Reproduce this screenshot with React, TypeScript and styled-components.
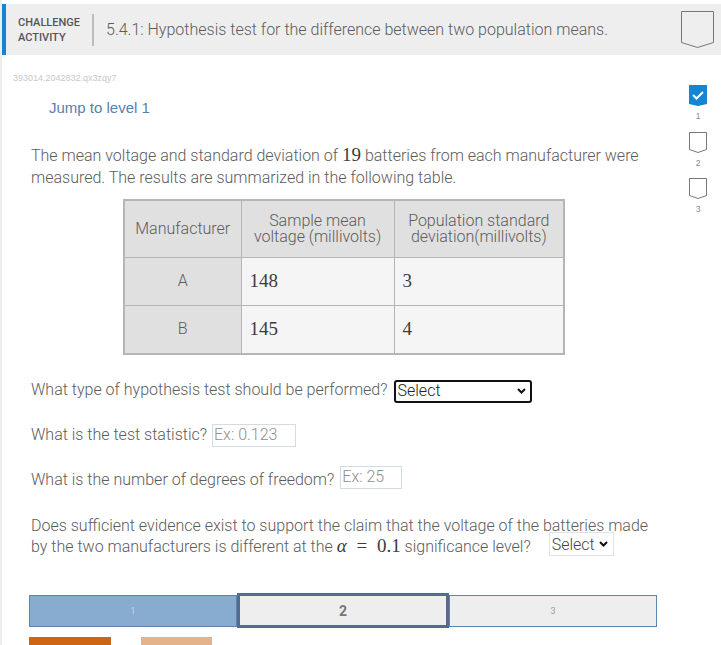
import React from 'react'
import styled, { createGlobalStyle } from 'styled-components'

const GlobalStyle = createGlobalStyle`
  html, body {
    margin: 0;
    padding: 0;
    background: #fff;
    overflow: hidden;
  }
  body {
    font-family: Roboto, "Liberation Sans", sans-serif;
    font-weight: 300;
    color: #5c5c5c;
  }
`

const Page = styled.div`
  width: 721px;
  height: 645px;
  box-sizing: border-box;
  padding-top: 4px;
  border-left: 2px solid #eeeeee;
  overflow: hidden;
`

const Header = styled.header`
  display: flex;
  align-items: center;
  height: 51px;
  background: #eeeeee;
  border-left: 4px solid #1584d2;
`

const ActivityLabel = styled.div`
  width: 74px;
  padding-left: 12px;
  font-size: 11px;
  font-weight: 500;
  line-height: 15px;
  color: #555;
`

const Divider = styled.div`
  width: 2px;
  height: 32px;
  background: #bdbdbd;
  margin-right: 12px;
`

const Title = styled.h1`
  flex: 1;
  margin: 0;
  font-size: 16px;
  font-weight: 300;
  color: #5c5c5c;
`

const HeaderBadge = styled.svg`
  display: block;
  margin-right: 7px;
`

const Body = styled.div`
  display: flex;
`

const Content = styled.main`
  width: 656px;
`

const ActivityId = styled.div`
  margin: 17px 0 0 11px;
  font-family: "Liberation Sans", Arial, sans-serif;
  font-weight: 400;
  font-size: 9px;
  line-height: 12px;
  color: #c8c8c8;
`

const JumpLink = styled.a`
  display: block;
  margin: 15px 0 0 47px;
  font-family: "Liberation Sans", Arial, sans-serif;
  font-weight: 400;
  font-size: 15px;
  line-height: 18px;
  color: #5b80a8;
`

const Prompt = styled.p`
  margin: 28px 0 0 29px;
  width: 620px;
  font-size: 16px;
  line-height: 22px;
`

const MathText = styled.span`
  font-family: "Liberation Serif", "DejaVu Serif", serif;
  font-weight: 400;
  font-size: 19px;
  line-height: 16px;
  color: #3c3c3c;
`

const MathSymbol = styled.i`
  font-style: italic;
`

const Equation = styled(MathText)`
  word-spacing: 5px;
`

const DataTable = styled.table`
  margin: 10px 0 0 121px;
  border-collapse: collapse;
  border: 2px solid #b5b5b5;
  font-size: 16px;
  line-height: 16px;
`

const HeadCell = styled.th<{ $w: number }>`
  width: ${(p) => p.$w}px;
  height: 57px;
  box-sizing: border-box;
  padding: 0;
  background: #e0e0e0;
  border: 1px solid #b5b5b5;
  font-weight: 300;
  text-align: center;
`

const RowHead = styled.td`
  height: 47px;
  padding: 0;
  background: #e0e0e0;
  border: 1px solid #b5b5b5;
  text-align: center;
`

const ValueCell = styled.td`
  padding: 0 0 0 8px;
  background: #f5f5f5;
  border: 1px solid #b5b5b5;
`

const Question = styled.div<{ $top: number }>`
  display: flex;
  align-items: center;
  margin: ${(p) => p.$top}px 0 0 29px;
  font-size: 16px;
  line-height: 22px;
`

const DarkSelect = styled.div`
  display: flex;
  align-items: center;
  justify-content: space-between;
  box-sizing: border-box;
  width: 138px;
  height: 23px;
  margin: 2px 0 0 6px;
  padding: 0 4px 0 2px;
  border: 2px solid #111;
  border-radius: 3px;
  font-weight: 300;
  color: #222;
`

const TextBox = styled.div<{ $w: number; $lift?: boolean }>`
  box-sizing: border-box;
  width: ${(p) => p.$w}px;
  height: 23px;
  margin-left: ${(p) => (p.$lift ? 6 : 5)}px;
  margin-bottom: ${(p) => (p.$lift ? 6 : 0)}px;
  padding-left: 1px;
  border: 1px solid #d3dde0;
  line-height: 20px;
  color: #8f8f8f;
`

const EvidenceText = styled.p`
  margin: 20px 0 0 29px;
  width: 625px;
  font-size: 16px;
  line-height: 21px;
`

const SmallSelect = styled.span`
  display: inline-flex;
  align-items: center;
  gap: 4px;
  box-sizing: border-box;
  width: 65px;
  height: 24px;
  margin: -6px 0 -6px 18px;
  padding-left: 2px;
  border: 1px solid #e2e2e2;
  color: #444;
  vertical-align: 2px;
`

const Steps = styled.div`
  display: flex;
  align-items: center;
  margin: 37px 0 0 27px;
  width: 628px;
  height: 34px;
`

const Step = styled.div<{ $state: 'done' | 'active' | 'todo' }>`
  box-sizing: border-box;
  display: flex;
  align-items: center;
  justify-content: center;
  flex: none;
  width: ${(p) => (p.$state === 'active' ? 212 : 208)}px;
  height: ${(p) => (p.$state === 'active' ? 35 : 32)}px;
  background: ${(p) => (p.$state === 'done' ? '#88abd0' : '#eeeeee')};
  border: ${(p) => (p.$state === 'active' ? 3 : 1)}px solid ${(p) => (p.$state === 'active' ? '#536b90' : '#5d85ad')};
  font-weight: ${(p) => (p.$state === 'active' ? 700 : 400)};
  font-size: ${(p) => (p.$state === 'active' ? 14 : 9)}px;
  color: ${(p) => (p.$state === 'done' ? '#c3d5e6' : p.$state === 'active' ? '#777' : '#999')};
`

const Actions = styled.div`
  display: flex;
  gap: 30px;
  margin: 9px 0 0 27px;
`

const ActionButton = styled.div<{ $w: number; $color: string }>`
  width: ${(p) => p.$w}px;
  height: 30px;
  background: ${(p) => p.$color};
`

const Rail = styled.aside`
  display: flex;
  flex-direction: column;
  align-items: center;
  width: 20px;
  margin: 30px 0 0 30px;
`

const RailItem = styled.div`
  display: flex;
  flex-direction: column;
  align-items: center;
  height: 46.5px;
`

const RailNumber = styled.span`
  margin-top: 5px;
  font-family: "Liberation Sans", Arial, sans-serif;
  font-size: 8.5px;
  line-height: 10px;
  font-weight: 400;
  color: #8a8a8a;
`

const RailIcon = styled.svg`
  display: block;
`

const Shield = () => (
  <RailIcon width="18" height="21" viewBox="0 0 18 21" fill="none">
    <path d="M0.5 0.5H17.5V17.5L9 20.5L0.5 17.5Z" stroke="#777" />
  </RailIcon>
)

const Caret = () => (
  <svg width="9" height="6" viewBox="0 0 9 6" fill="none">
    <path d="M1 1L4.5 4.5L8 1" stroke="#111" strokeWidth="2" />
  </svg>
)

const App: React.FC = () => (
  <>
    <GlobalStyle />
    <Page>
      <Header>
        <ActivityLabel>
          CHALLENGE
          <br />
          ACTIVITY
        </ActivityLabel>
        <Divider />
        <Title>5.4.1: Hypothesis test for the difference between two population means.</Title>
        <HeaderBadge width="33" height="37" viewBox="0 0 33 37" fill="none">
          <path d="M0.5 0.5H32.5V31.5L16.5 36.5L0.5 31.5Z" stroke="#777" />
        </HeaderBadge>
      </Header>
      <Body>
        <Content>
          <ActivityId>393014.2042832.qx3zqy7</ActivityId>
          <JumpLink>Jump to level 1</JumpLink>
          <Prompt>
            The mean voltage and standard deviation of <MathText>19</MathText> batteries from each manufacturer were
            measured. The results are summarized in the following table.
          </Prompt>
          <DataTable>
            <thead>
              <tr>
                <HeadCell $w={117}>Manufacturer</HeadCell>
                <HeadCell $w={153}>
                  Sample mean
                  <br />
                  voltage (millivolts)
                </HeadCell>
                <HeadCell $w={170}>
                  Population standard
                  <br />
                  deviation(millivolts)
                </HeadCell>
              </tr>
            </thead>
            <tbody>
              <tr>
                <RowHead>A</RowHead>
                <ValueCell>
                  <MathText>148</MathText>
                </ValueCell>
                <ValueCell>
                  <MathText>3</MathText>
                </ValueCell>
              </tr>
              <tr>
                <RowHead>B</RowHead>
                <ValueCell>
                  <MathText>145</MathText>
                </ValueCell>
                <ValueCell>
                  <MathText>4</MathText>
                </ValueCell>
              </tr>
            </tbody>
          </DataTable>
          <Question $top={23}>
            What type of hypothesis test should be performed?
            <DarkSelect>
              Select
              <Caret />
            </DarkSelect>
          </Question>
          <Question $top={21}>
            What is the test statistic?
            <TextBox $w={84}>Ex: 0.123</TextBox>
          </Question>
          <Question $top={19}>
            What is the number of degrees of freedom?
            <TextBox $w={62} $lift>
              Ex: 25
            </TextBox>
          </Question>
          <EvidenceText>
            Does sufficient evidence exist to support the claim that the voltage of the batteries made by the two
            manufacturers is different at the{' '}
            <Equation>
              <MathSymbol>α</MathSymbol> = 0.1
            </Equation>{' '}
            significance level?
            <SmallSelect>
              Select
              <Caret />
            </SmallSelect>
          </EvidenceText>
          <Steps>
            <Step $state="done">1</Step>
            <Step $state="active">2</Step>
            <Step $state="todo">3</Step>
          </Steps>
          <Actions>
            <ActionButton $w={82} $color="#cc6615" />
            <ActionButton $w={71} $color="#e4b38c" />
          </Actions>
        </Content>
        <Rail>
          <RailItem>
            <RailIcon width="18" height="21" viewBox="0 0 18 21">
              <path d="M0 0H18V19L9 21L0 19Z" fill="#1584d2" />
              <path d="M4 10L7.5 13.5L14 7" stroke="#fff" strokeWidth="2" fill="none" />
            </RailIcon>
            <RailNumber>1</RailNumber>
          </RailItem>
          <RailItem>
            <Shield />
            <RailNumber>2</RailNumber>
          </RailItem>
          <RailItem>
            <Shield />
            <RailNumber>3</RailNumber>
          </RailItem>
        </Rail>
      </Body>
    </Page>
  </>
)

export default App
